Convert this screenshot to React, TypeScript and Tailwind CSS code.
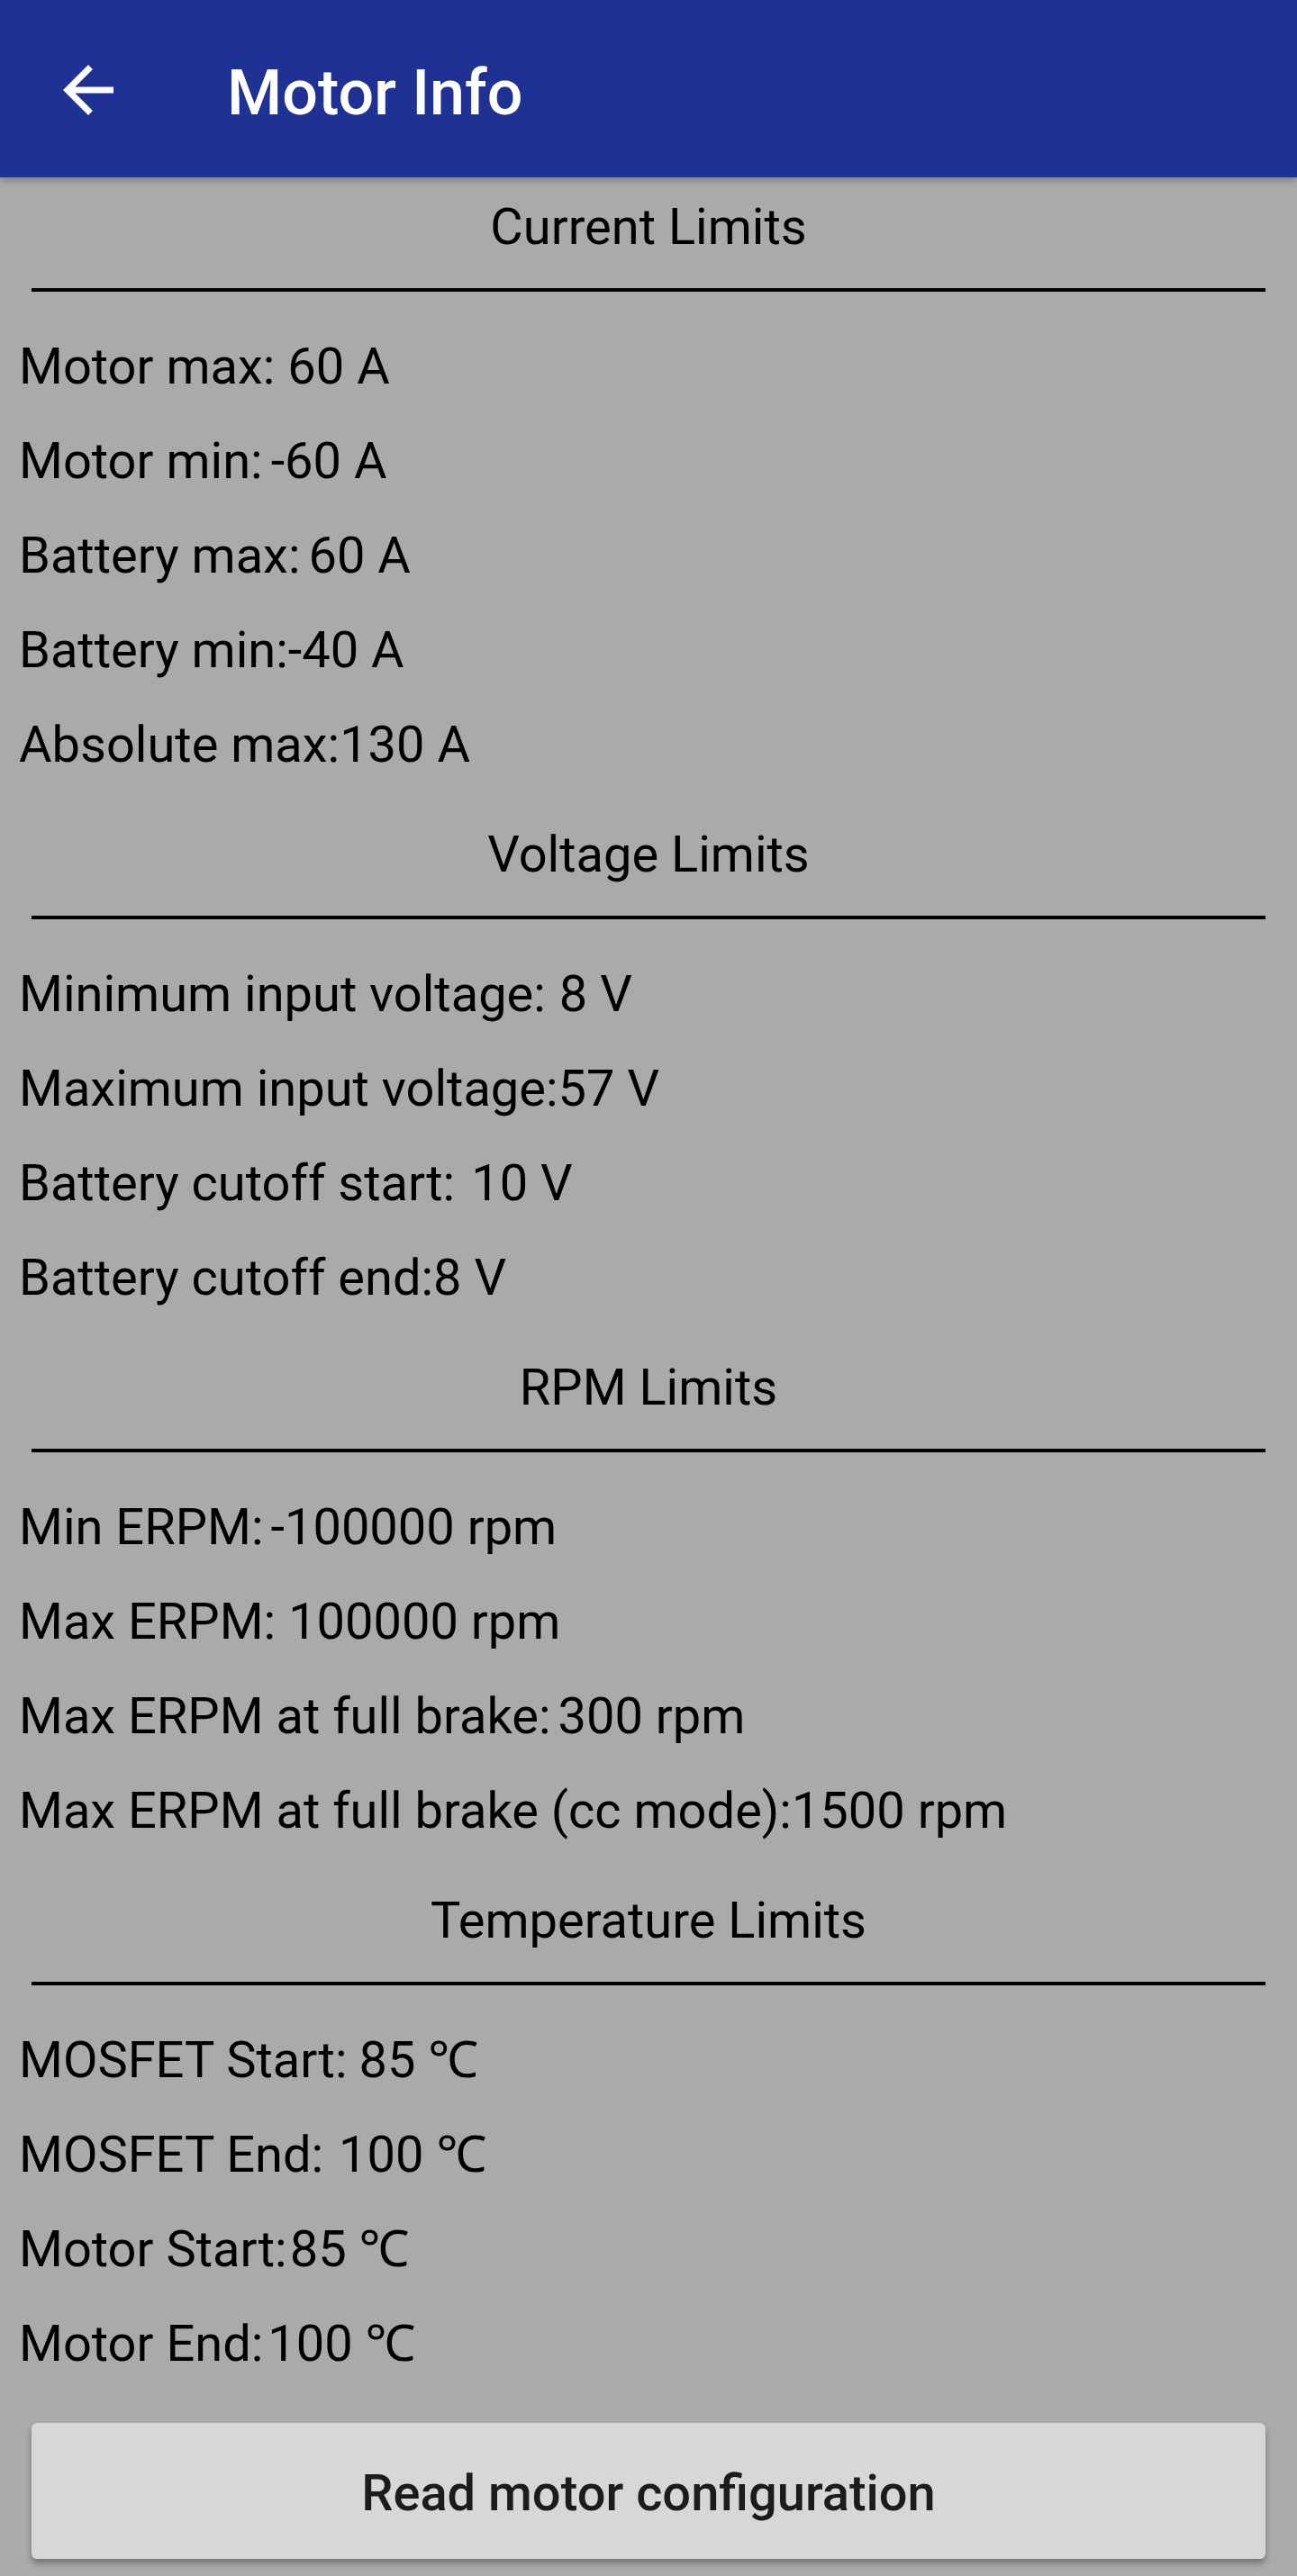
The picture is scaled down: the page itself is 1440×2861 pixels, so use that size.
import React from "react"

type Row = { label: string; value: string; gap: string }
type Section = { title: string; rows: Row[] }

const sections: Section[] = [
  {
    title: "Current Limits",
    rows: [
      { label: "Motor max:", value: "60 A", gap: "ml-[14px]" },
      { label: "Motor min:", value: "-60 A", gap: "ml-[9px]" },
      { label: "Battery max:", value: "60 A", gap: "ml-[9px]" },
      { label: "Battery min:", value: "-40 A", gap: "ml-0" },
      { label: "Absolute max:", value: "130 A", gap: "ml-0" },
    ],
  },
  {
    title: "Voltage Limits",
    rows: [
      { label: "Minimum input voltage:", value: "8 V", gap: "ml-[15px]" },
      { label: "Maximum input voltage:", value: "57 V", gap: "ml-0" },
      { label: "Battery cutoff start:", value: "10 V", gap: "ml-[18px]" },
      { label: "Battery cutoff end:", value: "8 V", gap: "ml-0" },
    ],
  },
  {
    title: "RPM Limits",
    rows: [
      { label: "Min ERPM:", value: "-100000 rpm", gap: "ml-[8px]" },
      { label: "Max ERPM:", value: "100000 rpm", gap: "ml-[14px]" },
      { label: "Max ERPM at full brake:", value: "300 rpm", gap: "ml-[8px]" },
      { label: "Max ERPM at full brake (cc mode):", value: "1500 rpm", gap: "ml-0" },
    ],
  },
  {
    title: "Temperature Limits",
    rows: [
      { label: "MOSFET Start:", value: "85 ℃", gap: "ml-[13px]" },
      { label: "MOSFET End:", value: "100 ℃", gap: "ml-[17px]" },
      { label: "Motor Start:", value: "85 ℃", gap: "ml-[3px]" },
      { label: "Motor End:", value: "100 ℃", gap: "ml-[5px]" },
    ],
  },
]

function BackArrow() {
  return (
    <svg viewBox="0 0 24 24" className="h-[84px] w-[84px]" fill="#ffffff">
      <path d="M20 11H7.83l5.59-5.59L12 4l-8 8 8 8 1.41-1.41L7.83 13H20v-2z" />
    </svg>
  )
}

export default function App() {
  return (
    <div
      className="flex min-h-[2861px] flex-col bg-[#aaaaaa] text-black"
      style={{ fontFamily: "Roboto, 'Noto Sans', sans-serif" }}
    >
      <header className="relative z-10 flex h-[197px] items-center bg-[#1f3193] shadow-[0_3px_8px_rgba(0,0,0,0.28)]">
        <div className="ml-[56px] mt-[2px]">
          <BackArrow />
        </div>
        <h1 className="ml-[112px] mt-[8px] text-[70px] font-medium leading-[82px] text-white">
          Motor Info
        </h1>
      </header>

      <main className="flex flex-col">
        {sections.map((section, i) => (
          <section key={section.title} className={i === 0 ? "mt-[22px]" : "mt-[36px]"}>
            <h2 className="text-center text-[56px] leading-[66px]">{section.title}</h2>
            <div className="mx-[35px] mt-[35px] h-[4px] bg-black" />
            <div className="mt-[31px] flex flex-col">
              {section.rows.map((row) => (
                <div key={row.label} className="flex pl-[21px] text-[56px] leading-[105px] whitespace-nowrap">
                  <span>{row.label}</span>
                  <span className={row.gap}>{row.value}</span>
                </div>
              ))}
            </div>
          </section>
        ))}
      </main>

      <div className="mx-[35px] mb-[19px] mt-[35px]">
        <button
          type="button"
          className="flex h-[151px] w-full items-center justify-center rounded-[6px] bg-[#d6d8d7] pt-[5px] text-[56px] font-medium text-[#1c1c1c] shadow-[0_5px_7px_rgba(0,0,0,0.3)]"
        >
          Read motor configuration
        </button>
      </div>
    </div>
  )
}
